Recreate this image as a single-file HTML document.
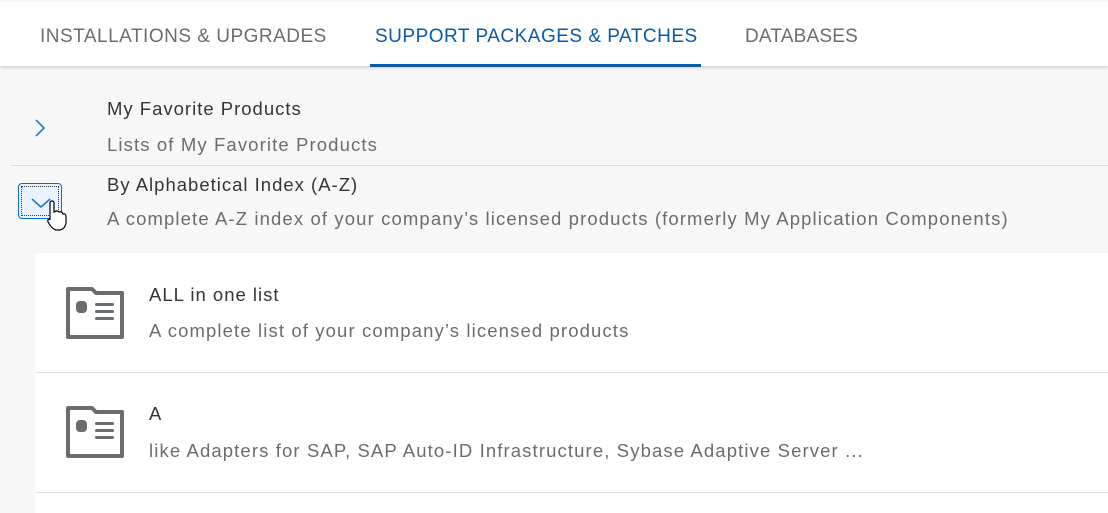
<!DOCTYPE html>
<html><head><style>
body{margin:0;width:1108px;height:503px;overflow:hidden;background:#f7f7f7;font-family:"Liberation Sans",sans-serif;position:relative}
.hdr{position:absolute;left:0;top:2px;width:1108px;height:64px;background:#fff;box-shadow:0 2px 3px rgba(0,0,0,.15)}
.tab{position:absolute;top:24px;font-size:19px;color:#6a6d70;letter-spacing:0.5px}
.t{position:absolute;font-size:18.5px;color:#32363a;white-space:nowrap;letter-spacing:1px}
.s{position:absolute;font-size:18.5px;color:#6a6d70;white-space:nowrap;letter-spacing:1.12px}
.panel{position:absolute;left:35px;top:253px;width:1073px;height:260px;background:#fff}
.line{position:absolute;height:1px;background:#e0e0e0}
</style></head><body>
<div class="hdr">
<div class="tab" style="left:40px">INSTALLATIONS &amp; UPGRADES</div>
<div class="tab" style="left:375px;color:#0a5aa8">SUPPORT PACKAGES &amp; PATCHES</div>
<div class="tab" style="left:745px;letter-spacing:0.2px">DATABASES</div>
<div style="position:absolute;left:370px;top:62px;width:331px;height:3px;background:#0a5aa8"></div>
</div>
<svg style="position:absolute;left:33px;top:118px" width="14" height="20"><path d="M3 2 L11 10 L3 18" fill="none" stroke="#0a6ed1" stroke-width="1.5"/></svg>
<div class="t" style="left:107px;top:98px">My Favorite Products</div>
<div class="s" style="left:107px;top:134px">Lists of My Favorite Products</div>
<div class="line" style="left:11px;top:165px;width:1097px;background:#d9d9d9"></div>
<div style="position:absolute;left:18px;top:183px;width:44px;height:36px;border:1px solid #0a6ed1;border-radius:4px;background:#e8f3ff;box-sizing:border-box"><div style="position:absolute;left:2px;top:2px;right:2px;bottom:2px;border:1px dotted #333"></div></div>
<svg style="position:absolute;left:30px;top:196px" width="22" height="14"><path d="M2 3 L11 11 L20 3" fill="none" stroke="#0a6ed1" stroke-width="1.5"/></svg>
<svg style="position:absolute;left:44px;top:200px" width="24" height="32"><path d="M6 3 Q6 1 8 1 Q10 1 10 3 V12 Q13 10 15 12 Q18 11 19 14 Q22 13 22 17 V23 Q21 29 16 30 H12 Q8 29 4 22 Q3 19 6 19 L6 20 Z" fill="#fff" stroke="#000" stroke-width="1.2"/></svg>
<div class="t" style="left:107px;top:174px">By Alphabetical Index (A-Z)</div>
<div class="s" style="left:107px;top:208px">A complete A-Z index of your company’s licensed products (formerly My Application Components)</div>
<div class="panel"></div>
<svg style="position:absolute;left:65px;top:286px" width="60" height="54"><path d="M3 3 H27 L31 7 H57 V51 H3 Z" fill="none" stroke="#6a6d70" stroke-width="4" stroke-linejoin="round"/><rect x="11" y="15" width="11" height="12" rx="4" fill="#6a6d70"/><rect x="30" y="17" width="19" height="3" rx="1.5" fill="#6a6d70"/><rect x="30" y="24" width="19" height="3" rx="1.5" fill="#6a6d70"/><rect x="30" y="31" width="19" height="3" rx="1.5" fill="#6a6d70"/></svg>
<div class="t" style="left:149px;top:284px">ALL in one list</div>
<div class="s" style="left:149px;top:320px">A complete list of your company’s licensed products</div>
<div class="line" style="left:35px;top:372px;width:1073px"></div>
<svg style="position:absolute;left:65px;top:405px" width="60" height="54"><path d="M3 3 H27 L31 7 H57 V51 H3 Z" fill="none" stroke="#6a6d70" stroke-width="4" stroke-linejoin="round"/><rect x="11" y="15" width="11" height="12" rx="4" fill="#6a6d70"/><rect x="30" y="17" width="19" height="3" rx="1.5" fill="#6a6d70"/><rect x="30" y="24" width="19" height="3" rx="1.5" fill="#6a6d70"/><rect x="30" y="31" width="19" height="3" rx="1.5" fill="#6a6d70"/></svg>
<div class="t" style="left:149px;top:403px">A</div>
<div class="s" style="left:149px;top:440px">like Adapters for SAP, SAP Auto-ID Infrastructure, Sybase Adaptive Server ...</div>
<div class="line" style="left:35px;top:492px;width:1073px"></div>
</body></html>
